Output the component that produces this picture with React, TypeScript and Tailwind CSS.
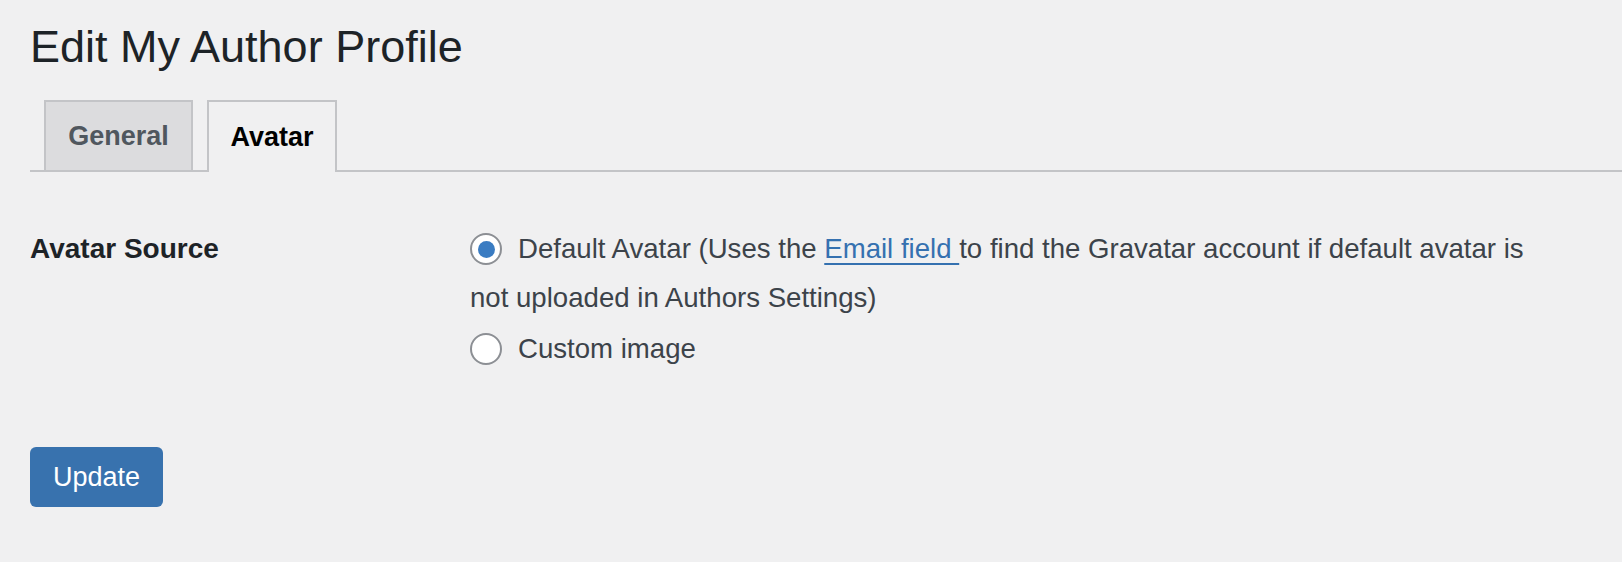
export default function App() {
  return (
    <div className="min-h-screen bg-[#f0f0f1] text-[#3c434a] font-['Liberation_Sans',Arial,sans-serif]">
      <div className="pl-[30px] pt-[21px]">
        {/* ── Title ── */}
        <h1 className="text-[45px] leading-[52px] font-normal text-[#1d2327]">Edit My Author Profile</h1>

        {/* ── Tabs ── */}
        <div className="mt-[27px] flex border-b-2 border-[#c3c4c7]">
          <div className="ml-[14px] -mb-[2px] w-[149px] h-[72px] flex items-center justify-center border-2 border-[#c3c4c7] bg-[#dcdcde] text-[27px] font-bold text-[#50575e]">
            General
          </div>
          <div className="ml-[14px] -mb-[2px] w-[130px] h-[72px] flex items-center justify-center border-2 border-b-0 border-[#c3c4c7] bg-[#f0f0f1] text-[27px] font-bold text-black">
            Avatar
          </div>
        </div>

        {/* ── Avatar source ── */}
        <div className="mt-[52px] grid grid-cols-[440px_1065px]">
          <div className="text-[28px] leading-[49px] font-bold text-[#1d2327]">Avatar Source</div>
          <div className="text-[27.6px] leading-[49px]">
            <label className="block">
              <span className="inline-flex items-center justify-center align-middle mr-[16px] -mt-[3px] w-[32px] h-[32px] rounded-full border-2 border-[#8c8f94] bg-white">
                <span className="w-[17px] h-[17px] rounded-full bg-[#3a7cc2]" />
              </span>
              Default Avatar (Uses the{' '}
              <a className="text-[#3571b0] underline decoration-2 underline-offset-[5px]">Email field </a>
              to find the Gravatar account if default avatar is not uploaded in Authors Settings)
            </label>
            <label className="block mt-[2px]">
              <span className="inline-flex align-middle mr-[16px] -mt-[3px] w-[32px] h-[32px] rounded-full border-2 border-[#8c8f94] bg-white" />
              Custom image
            </label>
          </div>
        </div>

        {/* ── Submit ── */}
        <button className="mt-[74px] w-[133px] h-[60px] rounded-[6px] bg-[#3872ae] text-white text-[27px] leading-none">
          Update
        </button>
      </div>
    </div>
  );
}
